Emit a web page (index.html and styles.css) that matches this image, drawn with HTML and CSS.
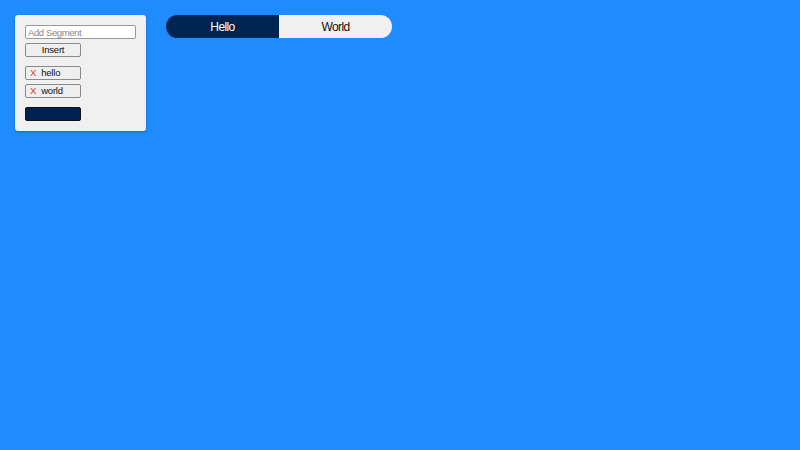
FILE: index.html
```html
<!DOCTYPE html>
<html>
<head>
<meta charset="utf-8">
<link rel="stylesheet" href="styles.css">
</head>
<body>
<div class="app">
  <div class="panel">
    <input class="seg-input" type="text" placeholder="Add Segment">
    <button class="btn insert">Insert</button>
    <div class="list">
      <button class="btn item"><span class="x">X</span>hello</button>
      <button class="btn item"><span class="x">X</span>world</button>
    </div>
    <button class="btn dark"></button>
  </div>
  <div class="segmented">
    <div class="seg active">Hello</div>
    <div class="seg">World</div>
  </div>
</div>
</body>
</html>
```
FILE: styles.css
```css
html, body {
  margin: 0;
  padding: 0;
  background: #1e8cff;
  width: 800px;
  height: 450px;
  overflow: hidden;
  font-family: "Liberation Sans", Arial, sans-serif;
}
.app {
  display: flex;
  align-items: flex-start;
  gap: 20px;
  padding: 15px;
}
.panel {
  width: 111px;
  padding: 10px;
  background: #f0f0f0;
  border-radius: 3px;
  box-shadow: 0 1px 3px rgba(0,0,0,0.25);
  display: flex;
  flex-direction: column;
  align-items: flex-start;
}
.seg-input {
  box-sizing: border-box;
  width: 111px;
  height: 14px;
  margin: 0;
  padding: 0 2px;
  border: 1px solid #999;
  border-radius: 2px;
  background: #fff;
  font-family: inherit;
  font-size: 9.5px;
  letter-spacing: -0.4px;
  color: #222;
}
.seg-input::placeholder { color: #888; }
.btn {
  box-sizing: border-box;
  width: 56px;
  height: 14px;
  margin: 0;
  padding: 0;
  border: 1px solid #8a8a8a;
  border-radius: 2px;
  background: #efefef;
  font-family: inherit;
  font-size: 9.5px;
  letter-spacing: -0.2px;
  color: #111;
  line-height: 12px;
}
.insert { margin-top: 4px; }
.list {
  display: flex;
  flex-direction: column;
  gap: 4px;
  margin-top: 9px;
}
.item {
  text-align: left;
  padding-left: 4px;
}
.x { color: #d03838; margin-right: 5px; }
.dark {
  margin-top: 9px;
  background: #002250;
  border-color: #111;
}
.segmented {
  display: flex;
  width: 226px;
  height: 23px;
  border-radius: 12px;
  overflow: hidden;
}
.seg {
  flex: 1;
  display: flex;
  align-items: center;
  justify-content: center;
  background: #f0f0f0;
  color: #111;
  font-size: 12px;
  letter-spacing: -0.6px;
}
.seg.active {
  background: #002451;
  color: #fff;
}
```
